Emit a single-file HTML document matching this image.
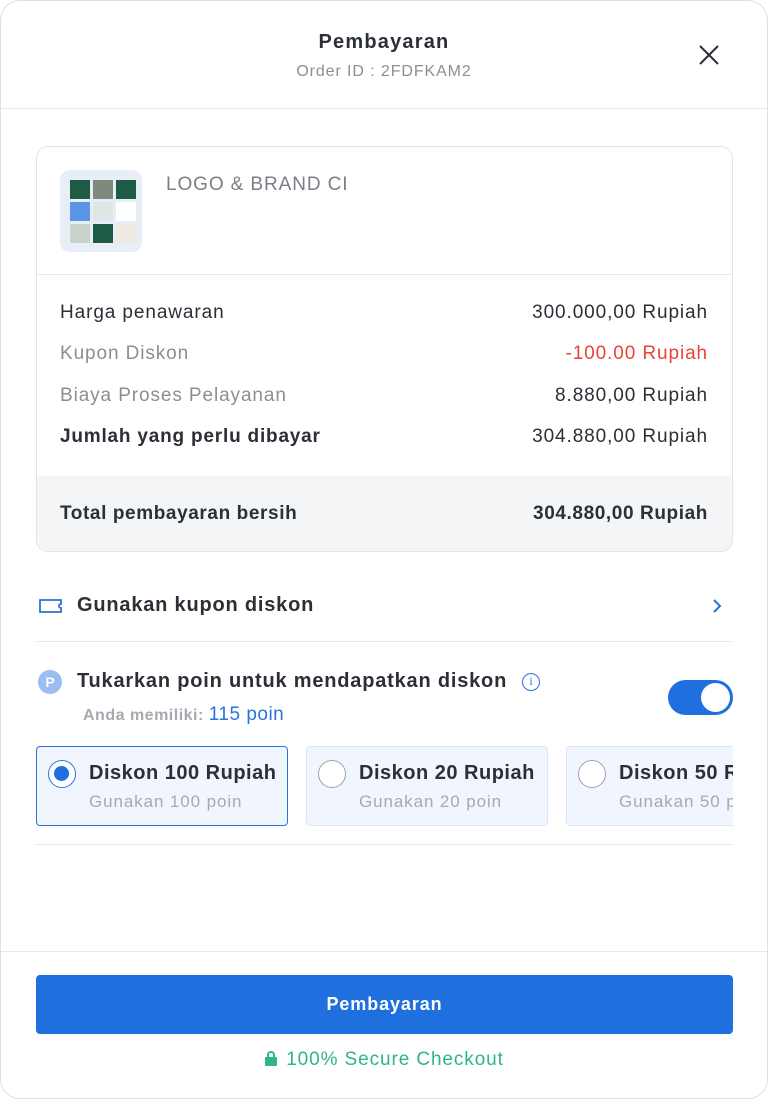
<!DOCTYPE html>
<html><head><meta charset="utf-8"><style>
*{box-sizing:border-box;margin:0;padding:0}
body{width:768px;height:1099px;background:#fff;font-family:"Liberation Sans",sans-serif;color:#2b2f36;position:relative;overflow:hidden;letter-spacing:0.9px}
.frame{position:absolute;left:0;top:0;width:768px;height:1099px;border:1px solid #dcdfe4;border-radius:20px}
.abs{position:absolute}
.hl{position:absolute;height:1px;background:#e6e8eb}
.row{position:absolute;left:60px;right:60px;font-size:19px;display:flex;justify-content:space-between}
.opt{position:absolute;top:746px;height:80px;border-radius:4px;background:#f1f6fe;border:1px solid #dbe6f7}
.opt .r{position:absolute;left:11px;top:13px;width:28px;height:28px;border-radius:50%;border:1.5px solid #9ea3aa;background:#fff}
.opt .t{position:absolute;left:52px;top:15px;font-size:20px;font-weight:bold;white-space:nowrap;color:#2b2f36;letter-spacing:0.5px}
.opt .s{position:absolute;left:52px;top:45px;font-size:17px;color:#a5a9b0;white-space:nowrap}
</style></head><body>
<div class="frame"></div>
<div class="abs" style="left:0;width:768px;top:31px;text-align:center;font-size:20px;font-weight:bold;letter-spacing:1.2px">Pembayaran</div>
<div class="abs" style="left:0;width:768px;top:63px;text-align:center;font-size:16px;color:#8a8f96">Order ID : 2FDFKAM2</div>
<svg class="abs" style="left:698px;top:44px" width="22" height="22" viewBox="0 0 22 22"><path d="M2 2L20 20M20 2L2 20" stroke="#2b2f36" stroke-width="2"/></svg>
<div class="hl" style="left:1px;right:1px;top:108px"></div>

<div class="abs" style="left:36px;top:146px;width:697px;height:406px;border:1px solid #e1e4e8;border-radius:12px;overflow:hidden">
 <div class="abs" style="left:23px;top:23px;width:82px;height:82px;border-radius:10px;background:#e8eef8;padding:10px 8px">
  <div style="display:grid;grid-template-columns:repeat(3,20px);gap:3px;margin-left:2px">
   <div style="height:19px;background:#1d5b45"></div><div style="height:19px;background:#7d8a7e"></div><div style="height:19px;background:#1d5b45"></div>
   <div style="height:19px;background:#5b95e6"></div><div style="height:19px;background:#dfe7e4"></div><div style="height:19px;background:#fff"></div>
   <div style="height:19px;background:#c9d3cc"></div><div style="height:19px;background:#1d5b45"></div><div style="height:19px;background:#efeae2"></div>
  </div>
 </div>
 <div class="abs" style="left:129px;top:27px;font-size:19px;color:#7a7f86">LOGO &amp; BRAND CI</div>
 <div class="hl" style="left:0;right:0;top:127px"></div>
 <div class="abs" style="left:0;right:0;top:329px;height:77px;background:#f4f5f6"></div>
</div>
<div class="row" style="top:302px"><span>Harga penawaran</span><span>300.000,00 Rupiah</span></div>
<div class="row" style="top:343px;color:#8a8f96"><span>Kupon Diskon</span><span style="color:#ea4335">-100.00 Rupiah</span></div>
<div class="row" style="top:385px;color:#8a8f96"><span>Biaya Proses Pelayanan</span><span style="color:#2b2f36">8.880,00 Rupiah</span></div>
<div class="row" style="top:426px"><span style="font-weight:bold;letter-spacing:0.8px">Jumlah yang perlu dibayar</span><span>304.880,00 Rupiah</span></div>
<div class="row" style="top:503px;font-weight:bold;letter-spacing:0.6px"><span>Total pembayaran bersih</span><span>304.880,00 Rupiah</span></div>

<svg class="abs" style="left:38px;top:598px" width="26" height="16" viewBox="0 0 26 16"><path d="M2 2H23V6A2 2 0 0 0 23 10V14H2Z" fill="none" stroke="#2a72de" stroke-width="1.8"/></svg>
<div class="abs" style="left:77px;top:594px;font-size:20px;font-weight:bold;letter-spacing:0.8px">Gunakan kupon diskon</div>
<svg class="abs" style="left:711px;top:598px" width="12" height="16" viewBox="0 0 12 16"><path d="M3 2L9 8L3 14" fill="none" stroke="#2a72de" stroke-width="2"/></svg>
<div class="hl" style="left:36px;right:36px;top:641px"></div>

<div class="abs" style="left:38px;top:670px;width:24px;height:24px;border-radius:50%;background:#9bbdf2;color:#fff;font-size:14px;font-weight:bold;text-align:center;line-height:24px;letter-spacing:0">P</div>
<div class="abs" style="left:77px;top:670px;font-size:20px;font-weight:bold;letter-spacing:0.8px">Tukarkan poin untuk mendapatkan diskon</div>
<div class="abs" style="left:522px;top:673px;width:18px;height:18px;border-radius:50%;border:1.5px solid #2a72de;color:#2a72de;font-size:12px;text-align:center;line-height:15px;font-family:'Liberation Serif',serif;letter-spacing:0">i</div>
<div class="abs" style="left:83px;top:704px;font-size:16px;font-weight:bold;color:#a5a9b0;letter-spacing:0.5px">Anda memiliki: <span style="font-weight:normal;color:#2a72de;font-size:19px">115 poin</span></div>
<div class="abs" style="left:668px;top:680px;width:65px;height:35px;border-radius:18px;background:#1f6fde"><div style="position:absolute;right:3px;top:3px;width:29px;height:29px;border-radius:50%;background:#fff"></div></div>

<div class="opt" style="left:36px;width:252px;border:1.5px solid #2a72de"><div class="r" style="border-color:#2a72de"><div style="position:absolute;left:5px;top:5px;width:15px;height:15px;border-radius:50%;background:#1f6fde"></div></div><div class="t">Diskon 100 Rupiah</div><div class="s">Gunakan 100 poin</div></div>
<div class="opt" style="left:306px;width:242px"><div class="r"></div><div class="t">Diskon 20 Rupiah</div><div class="s">Gunakan 20 poin</div></div>
<div class="opt" style="left:566px;width:167px;overflow:hidden;border-right:none;border-radius:4px 0 0 4px"><div class="r"></div><div class="t">Diskon 50 Rupiah</div><div class="s">Gunakan 50 poin</div></div>
<div class="hl" style="left:36px;right:36px;top:844px"></div>

<div class="hl" style="left:1px;right:1px;top:951px"></div>
<div class="abs" style="left:36px;top:975px;width:697px;height:59px;border-radius:4px;background:#1f6fde;color:#fff;font-size:18px;font-weight:bold;text-align:center;line-height:59px">Pembayaran</div>
<div class="abs" style="left:0;width:768px;top:1049px;text-align:center;font-size:19px;color:#2fb58a"><svg width="14" height="16" viewBox="0 0 14 16" style="vertical-align:-1px;margin-right:8px"><rect x="1" y="7" width="12" height="9" rx="1" fill="#2fb58a"/><path d="M4 7V5A3 3 0 0 1 10 5V7" fill="none" stroke="#2fb58a" stroke-width="2"/></svg>100% Secure Checkout</div>
</body></html>
